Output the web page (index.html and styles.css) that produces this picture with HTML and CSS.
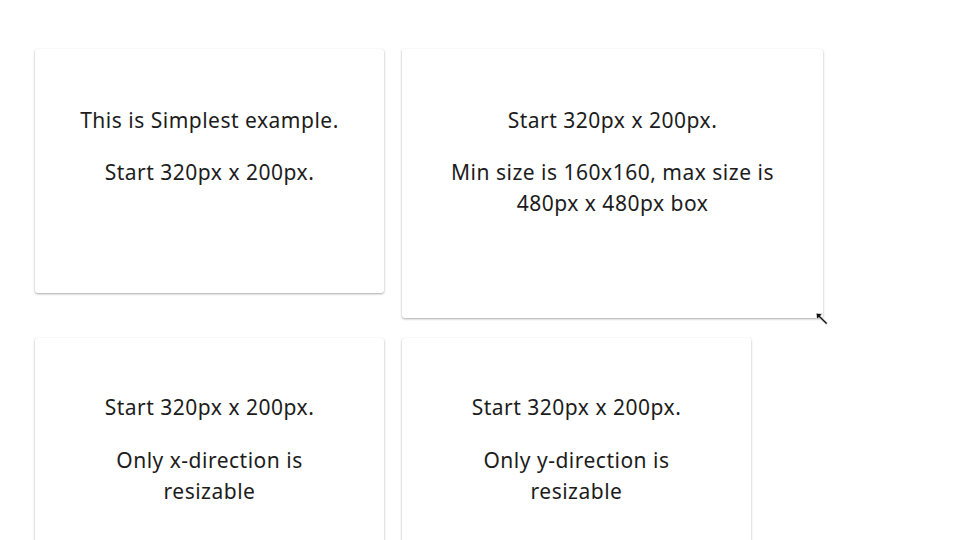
FILE: index.html
```html
<!DOCTYPE html>
<html>
<head>
<meta charset="utf-8">
<link rel="stylesheet" href="styles.css">
</head>
<body>
<div class="boxes">
  <div class="box box-a">
    <p>This is Simplest example.</p>
    <p>Start 320px x 200px.</p>
  </div>
  <div class="box box-b">
    <p>Start 320px x 200px.</p>
    <p>Min size is 160x160, max size is 480px x 480px box</p>
    <svg class="cursor" width="14" height="14" viewBox="0 0 14 14"><path d="M1 1 L7.5 1.8 L5.4 3.9 L12.6 11.1 L11.1 12.6 L3.9 5.4 L1.8 7.5 Z" fill="#111" stroke="#fff" stroke-width="0.8"/></svg>
  </div>
  <div class="box box-c">
    <p>Start 320px x 200px.</p>
    <p>Only x-direction is resizable</p>
  </div>
  <div class="box box-c">
    <p>Start 320px x 200px.</p>
    <p>Only y-direction is resizable</p>
  </div>
</div>
</body>
</html>
```
FILE: styles.css
```css
html, body {
  margin: 0;
  padding: 0;
  background: #fff;
}
body {
  font-family: "Noto Sans", "Noto Sans CJK JP", sans-serif;
  color: #1c1c1c;
}
.boxes {
  display: flex;
  flex-wrap: wrap;
  align-items: flex-start;
  gap: 20px 18px;
  padding: 49px 0 0 35px;
  width: 800px;
}
.box {
  position: relative;
  box-sizing: border-box;
  width: 349px;
  height: 244px;
  padding: 56px 42px 0;
  background: #fff;
  border-radius: 3px;
  box-shadow: 0 1px 3px rgba(0,0,0,0.16), 0 1px 2px rgba(0,0,0,0.2);
  text-align: center;
  font-size: 21px;
  letter-spacing: 0.5px;
  line-height: 31px;
}
.box p {
  margin: 0 0 21px;
}
.box-b {
  width: 421px;
  height: 269px;
  border-radius: 0 3px 3px 3px;
}
.box-c {
  height: 260px;
  padding-top: 54px;
}
.box-c p {
  margin-bottom: 22px;
}
.cursor {
  position: absolute;
  right: -6px;
  bottom: -8px;
}
```
